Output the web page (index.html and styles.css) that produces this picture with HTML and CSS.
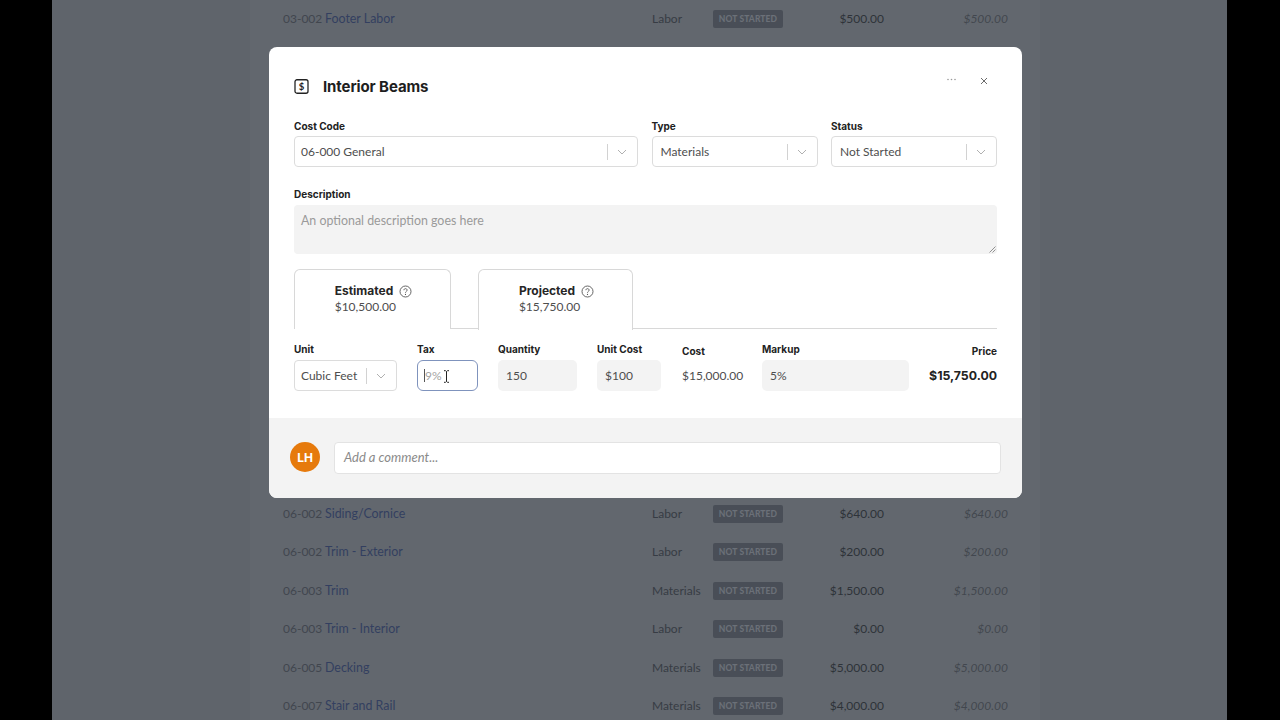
FILE: index.html
```html
<!DOCTYPE html>
<html lang="en">
<head>
  <meta charset="UTF-8" />
  <title>Interior Beams</title>
  <link rel="stylesheet" href="styles.css">
</head>
<body>
  <div class="screen">
    <!-- page behind the overlay -->
    <div class="sheet">
      <div class="row first">
        <span class="code">03-002</span><a class="name">Footer Labor</a>
        <span class="type">Labor</span><span class="badge">NOT STARTED</span>
        <span class="cost">$500.00</span><span class="proj">$500.00</span>
      </div>
      <div class="row-gap"></div>
      <div class="row">
        <span class="code">06-002</span><a class="name">Siding/Cornice</a>
        <span class="type">Labor</span><span class="badge">NOT STARTED</span>
        <span class="cost">$640.00</span><span class="proj">$640.00</span>
      </div>
      <div class="row">
        <span class="code">06-002</span><a class="name">Trim - Exterior</a>
        <span class="type">Labor</span><span class="badge">NOT STARTED</span>
        <span class="cost">$200.00</span><span class="proj">$200.00</span>
      </div>
      <div class="row">
        <span class="code">06-003</span><a class="name">Trim</a>
        <span class="type">Materials</span><span class="badge">NOT STARTED</span>
        <span class="cost">$1,500.00</span><span class="proj">$1,500.00</span>
      </div>
      <div class="row">
        <span class="code">06-003</span><a class="name">Trim - Interior</a>
        <span class="type">Labor</span><span class="badge">NOT STARTED</span>
        <span class="cost">$0.00</span><span class="proj">$0.00</span>
      </div>
      <div class="row">
        <span class="code">06-005</span><a class="name">Decking</a>
        <span class="type">Materials</span><span class="badge">NOT STARTED</span>
        <span class="cost">$5,000.00</span><span class="proj">$5,000.00</span>
      </div>
      <div class="row">
        <span class="code">06-007</span><a class="name">Stair and Rail</a>
        <span class="type">Materials</span><span class="badge">NOT STARTED</span>
        <span class="cost">$4,000.00</span><span class="proj">$4,000.00</span>
      </div>
    </div>

    <!-- modal -->
    <div class="modal">
      <div class="modal-body">
        <div class="modal-head">
          <svg class="title-icon" width="15" height="15" viewBox="0 0 15 15">
            <rect x="1" y="0.75" width="13" height="13.5" rx="2" fill="none" stroke="#222" stroke-width="1.3"/>
            <text x="7.5" y="11" text-anchor="middle" class="dollar">$</text>
          </svg>
          <h1>Interior Beams</h1>
          <span class="more">
            <svg width="9" height="3" viewBox="0 0 9 3"><circle cx="1" cy="1.5" r="0.8"/><circle cx="4.5" cy="1.5" r="0.8"/><circle cx="8" cy="1.5" r="0.8"/></svg>
          </span>
          <svg class="close" width="8" height="8" viewBox="0 0 8 8"><path d="M1 1l6 6M7 1l-6 6" stroke="#6b6b6b" stroke-width="1" fill="none"/></svg>
        </div>

        <div class="top-fields">
          <div class="field">
            <label>Cost Code</label>
            <div class="select"><span>06-000 General</span><i class="sep"></i><svg class="chev" width="10" height="6" viewBox="0 0 10 6"><path d="M1 1l4 4 4-4"/></svg></div>
          </div>
          <div class="field">
            <label>Type</label>
            <div class="select"><span>Materials</span><i class="sep"></i><svg class="chev" width="10" height="6" viewBox="0 0 10 6"><path d="M1 1l4 4 4-4"/></svg></div>
          </div>
          <div class="field">
            <label>Status</label>
            <div class="select"><span>Not Started</span><i class="sep"></i><svg class="chev" width="10" height="6" viewBox="0 0 10 6"><path d="M1 1l4 4 4-4"/></svg></div>
          </div>
        </div>

        <div class="field desc">
          <label>Description</label>
          <div class="textarea">An optional description goes here
            <svg class="grip" width="7" height="7" viewBox="0 0 7 7"><path d="M0.5 6.5l6-6M3.5 6.5l3-3" stroke="#777" stroke-width="0.8" fill="none"/></svg>
          </div>
        </div>

        <div class="tabs">
          <div class="tab est">
            <div class="tab-inner">
              <div class="tab-title">Estimated
                <svg width="13" height="13" viewBox="0 0 13 13"><circle cx="6.5" cy="6.5" r="5.5" fill="none" stroke="#555" stroke-width="0.9"/><path d="M4.9 5.2c0-2.1 3.2-2.1 3.2 0 0 1.2-1.6 1.2-1.6 2.5" fill="none" stroke="#555" stroke-width="0.9"/><circle cx="6.5" cy="9.4" r="0.6" fill="#555"/></svg>
              </div>
              <div class="tab-val">$10,500.00</div>
            </div>
          </div>
          <div class="tab proj-tab">
            <div class="tab-inner">
              <div class="tab-title">Projected
                <svg width="13" height="13" viewBox="0 0 13 13"><circle cx="6.5" cy="6.5" r="5.5" fill="none" stroke="#555" stroke-width="0.9"/><path d="M4.9 5.2c0-2.1 3.2-2.1 3.2 0 0 1.2-1.6 1.2-1.6 2.5" fill="none" stroke="#555" stroke-width="0.9"/><circle cx="6.5" cy="9.4" r="0.6" fill="#555"/></svg>
              </div>
              <div class="tab-val">$15,750.00</div>
            </div>
          </div>
        </div>

        <div class="line-fields">
          <div class="field f-unit">
            <label>Unit</label>
            <div class="select"><span>Cubic Feet</span><i class="sep"></i><svg class="chev" width="10" height="6" viewBox="0 0 10 6"><path d="M1 1l4 4 4-4"/></svg></div>
          </div>
          <div class="field f-tax">
            <label>Tax</label>
            <div class="input focus"><i class="caret"></i><span class="ph">9%</span>
              <svg class="ibeam" width="7" height="13" viewBox="0 0 7 13"><path d="M1 .7h1.6L3.5 1.6 4.4.7H6M3.5 1.6v9.8M1 12.3h1.6l.9-.9.9.9H6" fill="none" stroke="#222" stroke-width="1"/></svg>
            </div>
          </div>
          <div class="field f-qty">
            <label>Quantity</label>
            <div class="input">150</div>
          </div>
          <div class="field f-ucost">
            <label>Unit Cost</label>
            <div class="input">$100</div>
          </div>
          <div class="field f-cost">
            <label class="low">Cost</label>
            <div class="static">$15,000.00</div>
          </div>
          <div class="field f-markup">
            <label>Markup</label>
            <div class="input">5%</div>
          </div>
          <div class="field f-price">
            <label class="low">Price</label>
            <div class="static total">$15,750.00</div>
          </div>
        </div>
      </div>

      <div class="modal-foot">
        <div class="avatar">LH</div>
        <div class="comment">Add a comment...</div>
      </div>
    </div>
  </div>
</body>
</html>
```

FILE: styles.css
```css
/* ===== base ===== */
*,*::before,*::after{box-sizing:border-box;margin:0;padding:0;}
html,body{height:100%;overflow:hidden;}
body{background:#000;font-family:"Lato","Liberation Sans",sans-serif;font-size:12px;color:#4a4a4a;}

.screen{position:relative;width:1175px;height:720px;margin-left:52px;background:#5f646b;overflow:hidden;}

/* ===== page behind overlay ===== */
.sheet{width:790px;height:720px;margin-left:198px;background:#62676e;padding-left:33px;}
.row{display:flex;align-items:center;height:38.5px;white-space:nowrap;}
.row.first{height:36px;}
.row-gap{height:457.75px;}
.row span.code{width:42px;color:#41464e;}
.name{color:#333f60;width:327px;font-size:12.4px;}
.type{color:#373c44;width:61px;}
.badge{width:70px;height:18px;margin-top:1px;background:#494e57;color:#6b7078;font-size:8.5px;font-weight:900;letter-spacing:.1px;border-radius:2px;display:flex;align-items:center;justify-content:center;}
.cost{width:101px;text-align:right;color:#2e3339;}
.proj{width:124px;text-align:right;color:#42474f;font-style:italic;}

/* ===== modal ===== */
.modal{position:absolute;left:217px;top:47px;width:753px;height:451px;background:#fff;border-radius:8px;overflow:hidden;display:flex;flex-direction:column;}
.modal-body{flex:1;padding:0 25px;}
.modal-head{display:flex;align-items:center;height:64px;padding-top:14px;}
.title-icon{margin-right:14px;}
.dollar{font-family:"Lato",sans-serif;font-size:9.5px;font-weight:700;fill:#222;}
h1{flex:1;font-family:"Inter","Liberation Sans",sans-serif;font-size:15px;font-weight:700;color:#1e1e1e;letter-spacing:-.1px;}
.more{display:flex;margin:-13px 24px 0 0;}
.more svg{fill:#9a9a9a;}
.close{margin:-10px 9px 0 0;}

label{display:block;font-family:"Inter","Liberation Sans",sans-serif;font-size:10px;font-weight:700;color:#222;line-height:14px;margin-bottom:4px;}
.top-fields{display:flex;gap:13.5px;margin-top:8px;}
.top-fields label{margin-bottom:3px;}
.top-fields .field{width:166px;}
.top-fields .field:first-child{width:344px;}
.top-fields .field + .field .select{padding-left:8px;}

.select{display:flex;align-items:center;height:31px;padding:0 10px 0 6px;background:#fff;border:1px solid #dcdcdc;border-radius:4px;color:#4e4e4e;}
.select span{flex:1;white-space:nowrap;}
.sep{width:1px;height:16px;background:#d2d2d2;margin-right:9px;}
.chev{fill:none;stroke:#b0b0b0;stroke-width:1;}

.desc{margin-top:20px;}
.textarea{position:relative;height:49px;background:#f3f3f3;border-radius:4px;padding:8px 7px;color:#9a9a9a;font-size:12.4px;}
.grip{position:absolute;right:1px;bottom:1px;}

/* ===== tabs ===== */
.tabs{display:flex;gap:27px;height:60px;margin-top:15px;border-bottom:1px solid #d8d8d8;}
.tab{height:60px;border:1px solid #d8d8d8;border-bottom:none;border-radius:6px 6px 0 0;background:#fff;display:flex;justify-content:center;padding:13px 0 0 2px;}
.tab.est{width:157px;}
.tab.proj-tab{width:155px;height:61px;}
.tab-title{display:flex;align-items:center;gap:6px;font-family:"Inter","Liberation Sans",sans-serif;font-size:12px;font-weight:700;color:#262626;line-height:16px;}
.tab-val{color:#4e4e4e;line-height:16px;}

/* ===== line fields ===== */
.line-fields{display:flex;margin-top:13px;}
.f-unit{width:103px;margin-right:20px;}
.f-tax{width:61px;margin-right:20px;}
.f-qty{width:79px;margin-right:20px;}
.f-ucost{width:64px;margin-right:21px;}
.f-cost{width:60px;margin-right:20px;}
.f-markup{width:147px;}
.f-price{flex:1;text-align:right;}
label.low{margin-top:2px;margin-bottom:2px;}
.input{position:relative;display:flex;align-items:center;height:31px;padding:0 8px;background:#f3f3f3;border-radius:5px;color:#4e4e4e;}
.input.focus{background:#fff;border:1.5px solid #7f93bd;border-radius:6px;padding:0 6px;}
.caret{width:1px;height:13px;background:#555;}
.ph{color:#a4a4a4;}
.ibeam{position:absolute;left:25px;top:9px;}
.static{height:31px;line-height:31px;color:#4e4e4e;white-space:nowrap;}
.static.total{font-family:"Inter","Liberation Sans",sans-serif;font-weight:700;font-size:12.3px;color:#222;}

/* ===== footer ===== */
.modal-foot{display:flex;align-items:center;height:80px;background:#f3f3f3;padding:0 21px;}
.avatar{width:30px;height:30px;margin:-2px 14px 0 0;border-radius:50%;background:#e67a0c;color:#fff;font-family:"Inter","Liberation Sans",sans-serif;font-size:12px;font-weight:700;display:flex;align-items:center;justify-content:center;}
.comment{width:667px;height:32px;line-height:29px;background:#fff;border:1px solid #e3e3e3;border-radius:4px;padding-left:9px;color:#8a8a8a;font-size:13px;font-style:italic;}
```
